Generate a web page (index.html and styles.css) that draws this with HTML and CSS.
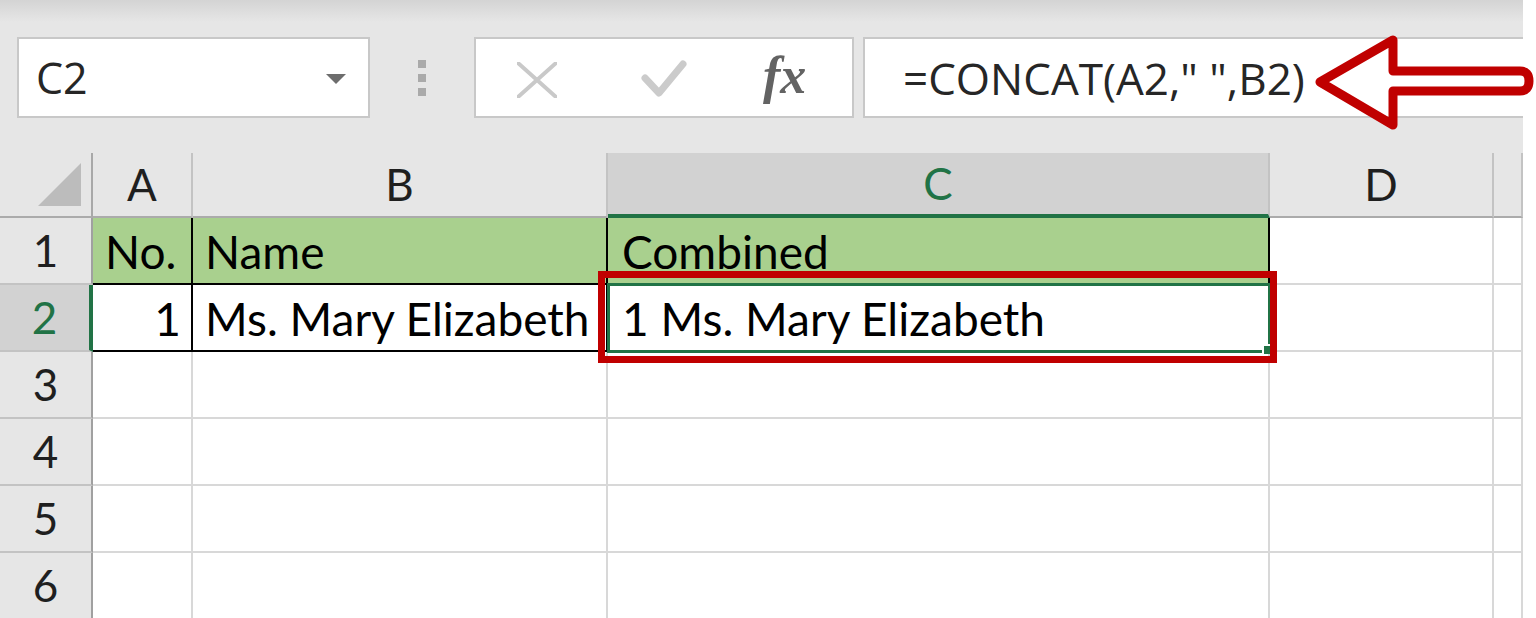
FILE: index.html
```html
<!DOCTYPE html>
<html>
<head>
<meta charset="utf-8">
<link rel="stylesheet" href="styles.css">
</head>
<body>
<div class="app">
  <div class="topfade"></div>
  <div class="fbar">
    <div class="namebox">
      <span class="nb-text">C2</span>
      <svg class="nb-caret" width="20" height="10" viewBox="0 0 20 10"><path d="M0 0 H20 L10 10 Z" fill="#6d6d6d"/></svg>
    </div>
    <div class="grip"><i></i><i></i><i></i></div>
    <div class="fxbox">
      <svg class="ic-x" width="40" height="36" viewBox="0 0 40 36"><path d="M1 1 L39 35 M39 1 L1 35" stroke="#c9c9c9" stroke-width="4" stroke-linecap="round" fill="none"/></svg>
      <svg class="ic-check" width="46" height="38" viewBox="0 0 46 38"><path d="M4 18 L18 33 L42 4" stroke="#cbcbcb" stroke-width="7" stroke-linecap="round" stroke-linejoin="round" fill="none"/></svg>
      <span class="fx">fx</span>
    </div>
    <div class="formula">=CONCAT(A2," ",B2)</div>
  </div>

  <div class="sheet">
    <div class="hd corner"><svg width="43" height="43" viewBox="0 0 43 43"><path d="M43 0 V43 H0 Z" fill="#bcbcbc"/></svg></div>
    <div class="hd col">A</div>
    <div class="hd col">B</div>
    <div class="hd col sel">C</div>
    <div class="hd col">D</div>
    <div class="hd col"></div>

    <div class="hd row">1</div>
    <div class="c g b">No.</div>
    <div class="c g b">Name</div>
    <div class="c g b pl">Combined</div>
    <div class="c"></div>
    <div class="c"></div>

    <div class="hd row rsel">2</div>
    <div class="c b r">1</div>
    <div class="c b">Ms. Mary Elizabeth</div>
    <div class="c b pl">1 Ms. Mary Elizabeth</div>
    <div class="c"></div>
    <div class="c"></div>

    <div class="hd row">3</div>
    <div class="c"></div><div class="c"></div><div class="c"></div><div class="c"></div><div class="c"></div>

    <div class="hd row">4</div>
    <div class="c"></div><div class="c"></div><div class="c"></div><div class="c"></div><div class="c"></div>

    <div class="hd row">5</div>
    <div class="c"></div><div class="c"></div><div class="c"></div><div class="c"></div><div class="c"></div>

    <div class="hd row">6</div>
    <div class="c"></div><div class="c"></div><div class="c"></div><div class="c"></div><div class="c"></div>
  </div>

  <div class="selbox"><span class="handle"></span></div>
  <div class="redbox"></div>
  <svg class="arrow" width="236" height="110" viewBox="0 0 236 110">
    <path d="M20 52 L93 10 L93 41 L220 41 Q229 41 229 51 Q229 61 220 61 L93 61 L93 95 Z" fill="none" stroke="#c00000" stroke-width="9" stroke-linejoin="round"/>
  </svg>
</div>
</body>
</html>
```

FILE: styles.css
```css
* { box-sizing: border-box; }
html, body { margin: 0; padding: 0; background: #ffffff; }
body { width: 1536px; height: 618px; overflow: hidden; font-family: "Lato", "Open Sans", sans-serif; }

.app {
  position: relative;
  width: 1523px;
  height: 618px;
  background: #e6e6e6;
}

.topfade {
  height: 22px;
  background: linear-gradient(#d4d4d4, #e6e6e6);
}

.fbar {
  display: flex;
  align-items: stretch;
  height: 81px;
  margin-top: 15px;
  padding-left: 17px;
}

.namebox {
  width: 353px;
  background: #fff;
  border: 2px solid #c8c8c8;
  display: flex;
  align-items: center;
  padding-left: 17px;
  padding-right: 22px;
}
.nb-text {
  font-family: "Open Sans", sans-serif;
  font-size: 43px;
  color: #262626;
  flex: 1;
  line-height: 1;
}
.nb-caret { margin-top: 2px; }

.grip {
  width: 8px;
  margin-left: 48px;
  margin-right: 48px;
  display: flex;
  flex-direction: column;
  justify-content: center;
  gap: 6px;
}
.grip i {
  display: block;
  width: 8px;
  height: 8px;
  background: #aaaaaa;
}

.fxbox {
  width: 380px;
  background: #fff;
  border: 2px solid #c8c8c8;
  display: flex;
  align-items: center;
  padding-left: 41px;
}
.ic-x { margin-top: 4px; }
.ic-check { margin-left: 84px; margin-top: 2px; }
.fx {
  margin-left: 76px;
  font-family: "Liberation Serif", serif;
  font-style: italic;
  font-weight: bold;
  font-size: 52px;
  color: #636363;
  line-height: 1;
  margin-top: -4px;
}

.formula {
  flex: 1;
  margin-left: 9px;
  background: #fff;
  border: 2px solid #c8c8c8;
  border-right: none;
  display: flex;
  align-items: center;
  padding-left: 38px;
  font-family: "Open Sans", sans-serif;
  font-size: 44px;
  color: #262626;
}

.sheet {
  margin-top: 35px;
  display: grid;
  grid-template-columns: 93px 100px 415px 662px 224px 29px;
  grid-template-rows: 65px repeat(6, 67px);
  background: #fff;
}

.hd {
  background: #e6e6e6;
  color: #1f1f1f;
  font-size: 44px;
  display: flex;
  align-items: center;
  justify-content: center;
  line-height: 67px;
}
.col {
  border-right: 2px solid #c3c3c3;
  border-bottom: 2px solid #ababab;
}
.corner {
  border-right: 2px solid #a8a8a8;
  border-bottom: 2px solid #ababab;
  justify-content: flex-end;
  align-items: flex-end;
  padding: 0 10px 10px 0;
}
.sel {
  background: #d2d2d2;
  color: #217346;
  border-bottom: 4px solid #217346;
}
.row {
  border-right: 2px solid #a0a0a0;
  border-bottom: 2px solid #c3c3c3;
}
.rsel {
  background: #d2d2d2;
  color: #217346;
  border-right: 4px solid #217346;
}

.c {
  border-right: 2px solid #d8d8d8;
  border-bottom: 2px solid #d8d8d8;
  font-size: 46px;
  line-height: 67px;
  color: #000;
  padding-left: 12px;
  white-space: nowrap;
  overflow: hidden;
}
.g { background: #a9d08e; }
.b { border-right-color: #000; border-bottom-color: #000; }
.r { text-align: right; padding-right: 10px; padding-left: 0; }
.pl { padding-left: 14px; }

.selbox {
  position: absolute;
  left: 607px;
  top: 283px;
  width: 664px;
  height: 70px;
  border: 3px solid #217346;
}
.handle {
  position: absolute;
  right: -4px;
  bottom: -4px;
  width: 10px;
  height: 10px;
  background: #217346;
  border-left: 2px solid #fff;
  border-top: 2px solid #fff;
}

.redbox {
  position: absolute;
  left: 598px;
  top: 271px;
  width: 679px;
  height: 92px;
  border: 7px solid #c00000;
}

.arrow {
  position: absolute;
  left: 1300px;
  top: 30px;
}
```
